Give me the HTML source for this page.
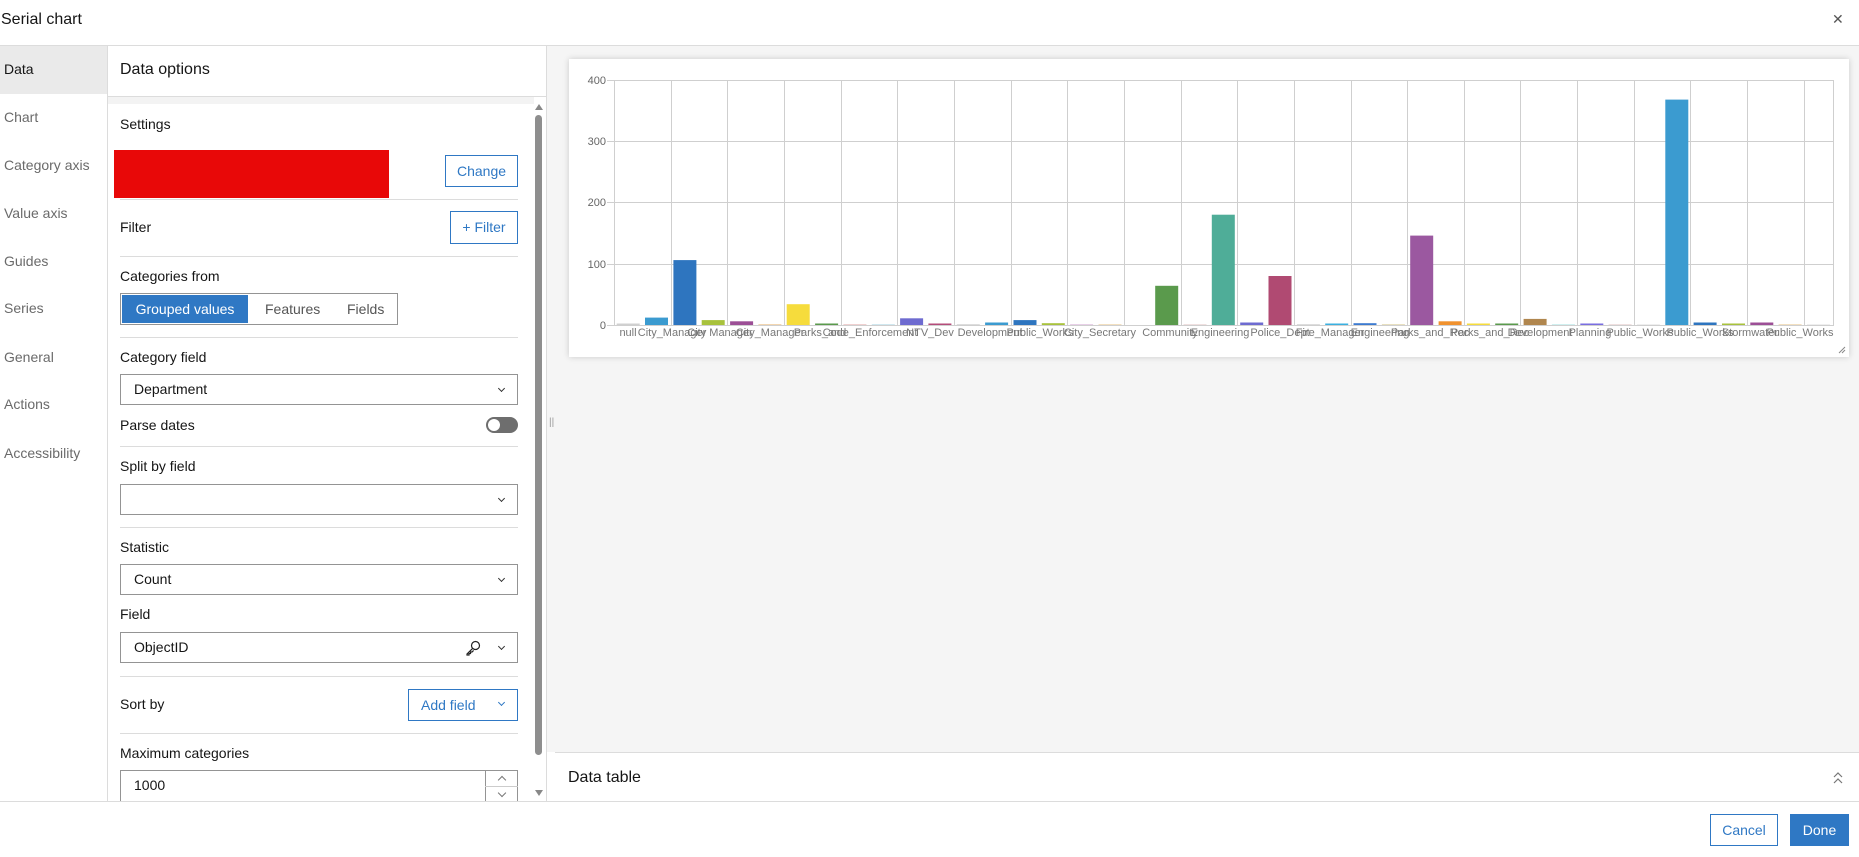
<!DOCTYPE html>
<html><head><meta charset="utf-8">
<style>
*{box-sizing:border-box;margin:0;padding:0}
body{width:1859px;height:857px;position:relative;overflow:hidden;background:#fff;font-family:"Liberation Sans",sans-serif;color:#151515}
.a{position:absolute}
.nav{left:4px;font-size:14px;color:#6a6a6a;line-height:16px}
.lbl{left:120px;font-size:14px;color:#151515;line-height:16px}
.div{left:120px;width:398px;height:1px;background:#dcdcdc}
.sel{left:120px;width:398px;height:31px;border:1px solid #949494;background:#fff;font-size:14px;line-height:29px;padding-left:13px}
.chev{position:absolute;right:13px;top:11px;width:5px;height:5px;border-right:1.2px solid #333;border-bottom:1.2px solid #333;transform:rotate(45deg)}
.btn{border:1px solid #2f78c4;color:#2f78c4;font-size:14px;text-align:center;background:#fff}
</style></head><body>

<div class="a" style="left:1px;top:11px;font-size:16px;line-height:18px">Serial chart</div>
<div class="a" style="left:1832px;top:11px;font-size:14px;color:#555">✕</div>
<div class="a" style="left:0;top:45px;width:1859px;height:1px;background:#dcdcdc"></div>

<!-- nav -->
<div class="a" style="left:0;top:46px;width:107px;height:48px;background:#eaeaea"></div>
<div class="a" style="left:107px;top:46px;width:1px;height:755px;background:#dcdcdc"></div>
<div class="a nav" style="top:61px;color:#151515">Data</div>
<div class="a nav" style="top:109px">Chart</div>
<div class="a nav" style="top:157px">Category axis</div>
<div class="a nav" style="top:205px">Value axis</div>
<div class="a nav" style="top:253px">Guides</div>
<div class="a nav" style="top:300px">Series</div>
<div class="a nav" style="top:349px">General</div>
<div class="a nav" style="top:396px">Actions</div>
<div class="a nav" style="top:445px">Accessibility</div>

<!-- panel -->
<div class="a" style="left:120px;top:61px;font-size:16px;line-height:18px">Data options</div>
<div class="a" style="left:108px;top:96px;width:438px;height:1px;background:#dcdcdc"></div>
<div class="a" style="left:108px;top:97px;width:426px;height:7px;background:#f3f3f3"></div>
<div class="a" style="left:546px;top:46px;width:1px;height:755px;background:#dcdcdc"></div>

<div class="a lbl" style="top:116px">Settings</div>
<div class="a" style="left:114px;top:150px;width:275px;height:48px;background:#e80808"></div>
<div class="a btn" style="left:445px;top:155px;width:73px;height:32px;line-height:30px">Change</div>
<div class="a div" style="top:199px"></div>
<div class="a lbl" style="top:219px">Filter</div>
<div class="a btn" style="left:450px;top:211px;width:68px;height:33px;line-height:31px">+ Filter</div>
<div class="a div" style="top:256px"></div>
<div class="a lbl" style="top:268px">Categories from</div>
<div class="a" style="left:120px;top:293px;width:278px;height:32px;border:1px solid #949494;font-size:14px;line-height:30px;color:#555">
  <div class="a" style="left:1px;top:1px;width:126px;height:28px;background:#2f78c4;color:#fff;text-align:center;line-height:28px">Grouped values</div>
  <div class="a" style="left:144px;top:0">Features</div>
  <div class="a" style="left:226px;top:0">Fields</div>
</div>
<div class="a div" style="top:337px"></div>
<div class="a lbl" style="top:349px">Category field</div>
<div class="a sel" style="top:374px">Department<span class="chev"></span></div>
<div class="a lbl" style="top:417px">Parse dates</div>
<div class="a" style="left:486px;top:417px;width:32px;height:16px;border-radius:8px;background:#6e6e6e"><div class="a" style="left:2px;top:2px;width:12px;height:12px;border-radius:6px;background:#fff"></div></div>
<div class="a div" style="top:446px"></div>
<div class="a lbl" style="top:458px">Split by field</div>
<div class="a sel" style="top:484px"><span class="chev"></span></div>
<div class="a div" style="top:527px"></div>
<div class="a lbl" style="top:539px">Statistic</div>
<div class="a sel" style="top:564px">Count<span class="chev"></span></div>
<div class="a lbl" style="top:606px">Field</div>
<div class="a sel" style="top:632px">ObjectID
  <svg class="a" style="left:344px;top:7px" width="16" height="16" viewBox="0 0 16 16" fill="none" stroke="#222" stroke-width="1.2"><circle cx="10.5" cy="5.5" r="4"/><path d="M7.6 8.4 L2 14 L2 15 L4 15 L4 13.5 L5.5 13.5 L5.5 12 L7 12 L8.6 10.4"/></svg>
  <span class="chev"></span></div>
<div class="a div" style="top:676px"></div>
<div class="a lbl" style="top:696px">Sort by</div>
<div class="a btn" style="left:408px;top:689px;width:110px;height:32px;line-height:30px;text-align:left;padding-left:12px">Add field<span class="chev" style="border-color:#2f78c4;top:10px"></span></div>
<div class="a div" style="top:733px"></div>
<div class="a lbl" style="top:745px">Maximum categories</div>
<div class="a" style="left:120px;top:770px;width:398px;height:31px;overflow:hidden">
<div class="a" style="left:0;top:0;width:398px;height:40px;border:1px solid #949494;font-size:14px;line-height:29px;padding-left:13px">1000
  <div class="a" style="left:364px;top:0;width:1px;height:40px;background:#949494"></div>
  <div class="a" style="left:364px;top:15px;width:34px;height:1px;background:#ccc"></div>
  <div class="a" style="left:378px;top:6px;width:6px;height:6px;border-left:1px solid #777;border-top:1px solid #777;transform:rotate(45deg)"></div>
  <div class="a" style="left:378px;top:19px;width:6px;height:6px;border-right:1px solid #777;border-bottom:1px solid #777;transform:rotate(45deg)"></div>
</div></div>
<!-- scrollbar -->
<div class="a" style="left:535px;top:104px;width:0;height:0;border-left:4px solid transparent;border-right:4px solid transparent;border-bottom:6px solid #888"></div>
<div class="a" style="left:535px;top:115px;width:7px;height:640px;border-radius:4px;background:#8e8e8e"></div>
<div class="a" style="left:535px;top:790px;width:0;height:0;border-left:4px solid transparent;border-right:4px solid transparent;border-top:6px solid #888"></div>

<!-- right area -->
<div class="a" style="left:547px;top:46px;width:1312px;height:706px;background:#f5f5f5"></div>
<div class="a" style="left:549px;top:417px;font-size:10px;color:#999">||</div>
<div class="a" style="left:569px;top:59px;width:1280px;height:298px;background:#fff;box-shadow:0 0 6px rgba(0,0,0,0.18)"></div>
<svg class="a" style="left:0;top:0" width="1859" height="400" font-family="Liberation Sans, sans-serif">
<g stroke="#cfcfcf" stroke-width="1">
<line x1="607" y1="80.5" x2="1833" y2="80.5"/><line x1="607" y1="141.5" x2="1833" y2="141.5"/><line x1="607" y1="202.5" x2="1833" y2="202.5"/><line x1="607" y1="264.5" x2="1833" y2="264.5"/><line x1="607" y1="325.5" x2="1833" y2="325.5"/>
<line x1="614.5" y1="80" x2="614.5" y2="326"/><line x1="671.5" y1="80" x2="671.5" y2="326"/><line x1="727.5" y1="80" x2="727.5" y2="326"/><line x1="784.5" y1="80" x2="784.5" y2="326"/><line x1="841.5" y1="80" x2="841.5" y2="326"/><line x1="897.5" y1="80" x2="897.5" y2="326"/><line x1="954.5" y1="80" x2="954.5" y2="326"/><line x1="1011.5" y1="80" x2="1011.5" y2="326"/><line x1="1067.5" y1="80" x2="1067.5" y2="326"/><line x1="1124.5" y1="80" x2="1124.5" y2="326"/><line x1="1181.5" y1="80" x2="1181.5" y2="326"/><line x1="1237.5" y1="80" x2="1237.5" y2="326"/><line x1="1294.5" y1="80" x2="1294.5" y2="326"/><line x1="1351.5" y1="80" x2="1351.5" y2="326"/><line x1="1407.5" y1="80" x2="1407.5" y2="326"/><line x1="1464.5" y1="80" x2="1464.5" y2="326"/><line x1="1520.5" y1="80" x2="1520.5" y2="326"/><line x1="1577.5" y1="80" x2="1577.5" y2="326"/><line x1="1634.5" y1="80" x2="1634.5" y2="326"/><line x1="1690.5" y1="80" x2="1690.5" y2="326"/><line x1="1747.5" y1="80" x2="1747.5" y2="326"/><line x1="1804.5" y1="80" x2="1804.5" y2="326"/><line x1="1833.5" y1="80" x2="1833.5" y2="326"/>
</g>
<g font-size="11" fill="#666" text-anchor="end">
<text x="606" y="84">400</text><text x="606" y="145">300</text><text x="606" y="206">200</text><text x="606" y="268">100</text><text x="606" y="329">0</text>
</g>
<g transform="translate(0,325) scale(1,-1)">
<rect x="616.7" width="23" height="1.5" fill="#d0d0d0"/>
<rect x="645" width="23" height="7.4" fill="#3b9bd0"/>
<rect x="673.4" width="23" height="64.9" fill="#2e75bf"/>
<rect x="701.7" width="23" height="4.9" fill="#a8c23c"/>
<rect x="730.1" width="23" height="3.7" fill="#9c4f96"/>
<rect x="758.4" width="23" height="1" fill="#f3d6b0"/>
<rect x="786.7" width="23" height="20.8" fill="#f6dc3c"/>
<rect x="815.1" width="23" height="1.5" fill="#5a9a4c"/>
<rect x="843.4" width="23" height="1" fill="#f0d0d0"/>
<rect x="871.8" width="23" height="1" fill="#d0e8f0"/>
<rect x="900.1" width="23" height="6.7" fill="#6e6bd0"/>
<rect x="928.4" width="23" height="1.5" fill="#b44c7a"/>
<rect x="956.8" width="23" height="1" fill="#ddd"/>
<rect x="985.1" width="23" height="2.5" fill="#3b9bd0"/>
<rect x="1013.5" width="23" height="4.9" fill="#2e75bf"/>
<rect x="1041.8" width="23" height="1.8" fill="#a8c23c"/>
<rect x="1070.1" width="23" height="1" fill="#e8d0e8"/>
<rect x="1098.5" width="23" height="1" fill="#f3e0c0"/>
<rect x="1155.2" width="23" height="39.2" fill="#5a9a4c"/>
<rect x="1183.5" width="23" height="1" fill="#f0e0e0"/>
<rect x="1211.8" width="23" height="110.3" fill="#4fad98"/>
<rect x="1240.2" width="23" height="2.5" fill="#6e6bd0"/>
<rect x="1268.5" width="23" height="49" fill="#b04a72"/>
<rect x="1296.9" width="23" height="1" fill="#ddd"/>
<rect x="1325.2" width="23" height="1.5" fill="#3bb0e0"/>
<rect x="1353.5" width="23" height="1.8" fill="#3c7ad0"/>
<rect x="1381.9" width="23" height="1" fill="#e8e0c0"/>
<rect x="1410.2" width="23" height="89.4" fill="#9b58a0"/>
<rect x="1438.6" width="23" height="3.7" fill="#f0922f"/>
<rect x="1466.9" width="23" height="1.5" fill="#f6dc3c"/>
<rect x="1495.2" width="23" height="1.5" fill="#5a9a4c"/>
<rect x="1523.6" width="23" height="6.1" fill="#b0864e"/>
<rect x="1551.9" width="23" height="1" fill="#d0f0f0"/>
<rect x="1580.3" width="23" height="1.5" fill="#7a6ee0"/>
<rect x="1608.6" width="23" height="1" fill="#f0e0e0"/>
<rect x="1636.9" width="23" height="1" fill="#eee"/>
<rect x="1665.3" width="23" height="225.4" fill="#3b9bd0"/>
<rect x="1693.6" width="23" height="2.5" fill="#2e75bf"/>
<rect x="1722" width="23" height="1.5" fill="#a8c23c"/>
<rect x="1750.3" width="23" height="2.5" fill="#9c4f96"/>
<rect x="1778.6" width="23" height="1" fill="#f3e0c0"/>
<rect x="1807" width="23" height="1" fill="#eee"/>
</g>
<g font-size="11" fill="#777" text-anchor="middle">
<text x="628" y="336">null</text>
<text x="672" y="336">City_Manager</text><text x="720" y="336">City Manager</text><text x="770" y="336">City_Manager</text><text x="820" y="336">Parks_and</text><text x="870" y="336">Code_Enforcement</text><text x="930" y="336">NTV_Dev</text><text x="990" y="336">Development</text><text x="1040" y="336">Public_Works</text><text x="1100" y="336">City_Secretary</text><text x="1170" y="336">Community</text><text x="1220" y="336">Engineering</text><text x="1280" y="336">Police_Dept</text><text x="1330" y="336">Fire_Manager</text><text x="1380" y="336">Engineering</text><text x="1430" y="336">Parks_and_Rec</text><text x="1490" y="336">Parks_and_Rec</text><text x="1540" y="336">Development</text><text x="1590" y="336">Planning</text><text x="1640" y="336">Public_Works</text><text x="1700" y="336">Public_Works</text><text x="1750" y="336">Stormwater</text><text x="1800" y="336">Public_Works</text>
</g>
<path d="M1839 353 L1845 347 M1842 353 L1845 350" stroke="#888" stroke-width="1"/>
</svg>

<!-- data table -->
<div class="a" style="left:555px;top:752px;width:1304px;height:1px;background:#dcdcdc"></div>
<div class="a" style="left:555px;top:753px;width:1304px;height:48px;background:#fff"></div>
<div class="a" style="left:568px;top:769px;font-size:16px;line-height:18px">Data table</div>
<svg class="a" style="left:1832px;top:771px" width="12" height="14" viewBox="0 0 12 14" fill="none" stroke="#777" stroke-width="1.2"><path d="M2 6 L6 2 L10 6 M2 12 L6 8 L10 12"/></svg>
<div class="a" style="left:0;top:801px;width:1859px;height:1px;background:#dcdcdc"></div>

<!-- footer -->
<div class="a btn" style="left:1710px;top:814px;width:68px;height:32px;line-height:30px">Cancel</div>
<div class="a" style="left:1790px;top:814px;width:59px;height:32px;line-height:32px;background:#2f78c4;color:#fff;font-size:14px;text-align:center">Done</div>
</body></html>
